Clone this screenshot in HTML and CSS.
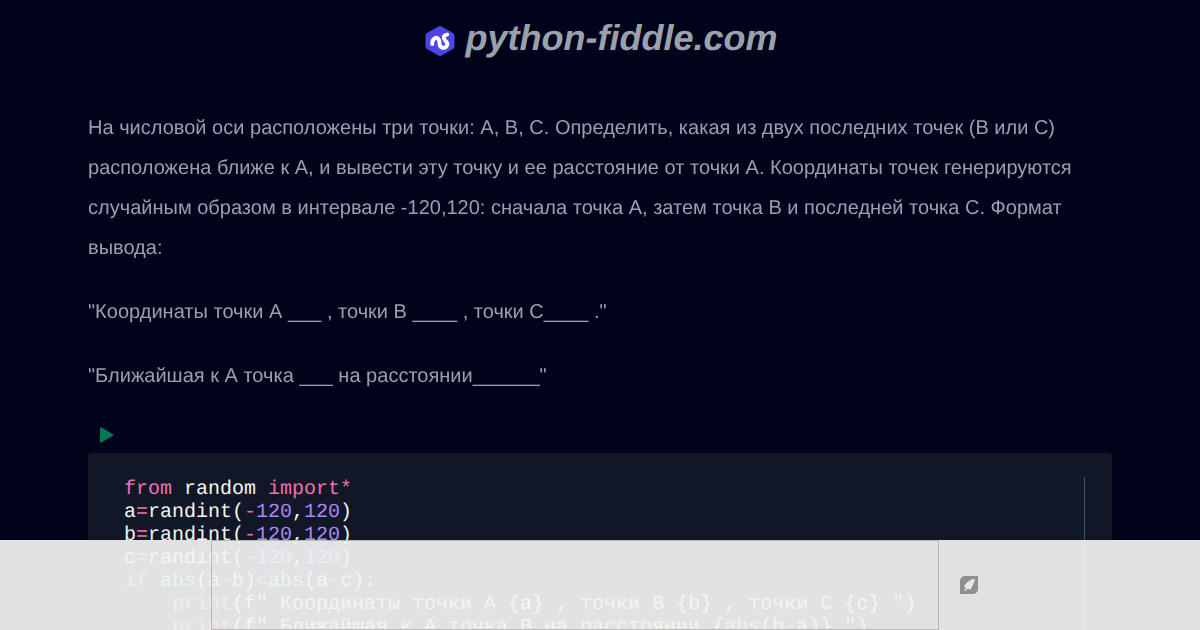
FILE: index.html
```html
<!DOCTYPE html>
<html lang="ru">
<head>
<meta charset="utf-8">
<title>python-fiddle.com</title>
<link rel="stylesheet" href="styles.css">
</head>
<body>
<header class="site-header">
  <svg class="logo" viewBox="0.5 0.5 29 29" width="30" height="30" aria-hidden="true">
    <path class="logo-hex" d="M13.500.9a3 3 0 0 1 3 0l11 6.300a3 3 0 0 1 1.500 2.600v10.400a3 3 0 0 1-1.500 2.600l-11 6.300a3 3 0 0 1-3 0l-11-6.300A3 3 0 0 1 1 20.200V9.800a3 3 0 0 1 1.500-2.600z"/>
    <path class="logo-mark" d="M7.500 18C7 13 11.500 10.500 13.500 13S13 21 17.500 21.500C21.500 21.800 23.500 18 20.800 15.500 18 13 17.500 9.500 22 8.800"/>
  </svg>
  <span class="brand">python-fiddle.com</span>
</header>
<main class="content">
  <p class="lead">На числовой оси расположены три точки: А, В, С. Определить, какая из двух последних точек (В или С) расположена ближе к А, и вывести эту точку и ее расстояние от точки А. Координаты точек генерируются случайным образом в интервале -120,120: сначала точка А, затем точка В и последней точка С. Формат вывода:</p>
  <p class="lead">"Координаты точки А ___ , точки В ____ , точки С____ ."</p>
  <p class="lead">"Ближайшая к А точка ___ на расстоянии______"</p>
  <div class="toolbar">
    <svg class="run" viewBox="0 0 14 16" width="14" height="16" aria-hidden="true"><path d="M0 1.400a1 1 0 0 1 1.500-.8l11.500 6.600a.9.900 0 0 1 0 1.600L1.500 15.400a1 1 0 0 1-1.500-.8z"/></svg>
  </div>
  <div class="editor">
<pre class="code"><span class="k">from</span> random <span class="k">import*</span>
a<span class="k">=</span>randint(<span class="k">-</span><span class="n">120</span>,<span class="n">120</span>)
b<span class="k">=</span>randint(<span class="k">-</span><span class="n">120</span>,<span class="n">120</span>)
c<span class="k">=</span>randint(<span class="k">-</span><span class="n">120</span>,<span class="n">120</span>)
<span class="k">if</span> <span class="b">abs</span>(a<span class="k">-</span>b)<span class="k">&lt;</span><span class="b">abs</span>(a<span class="k">-</span>c):
    <span class="k">print</span>(f<span class="s">" Координаты точки А </span>{a}<span class="s"> , точки В </span>{b}<span class="s"> , точки С </span>{c}<span class="s"> "</span>)
    <span class="k">print</span>(f<span class="s">" Ближайшая к А точка В на расстоянии </span>{<span class="b">abs</span>(b<span class="k">-</span>a)}<span class="s"> "</span>)</pre>
    <div class="ruler"></div>
  </div>
</main>
<aside class="ad-bar">
  <div class="ad-slot"></div>
  <svg class="ad-icon" viewBox="0 0 18 18" width="18" height="18" aria-hidden="true">
    <path class="ad-leaf" d="M5 0h13v13a5 5 0 0 1-5 5H0V5a5 5 0 0 1 5-5z"/>
    <path class="ad-plane" d="M15.500 2.500C10 3.500 5.500 6.500 4 11l2 .8-2.500 3.700 5-2.800 1.700 1c2.300-3 4.300-7 4.800-11.200z"/>
  </svg>
</aside>
</body>
</html>
```
FILE: styles.css
```css
html, body {
  margin: 0;
  height: 630px;
  overflow: hidden;
}
body {
  position: relative;
  background: #01031a;
  font-family: "Liberation Sans", Arial, sans-serif;
  color: #9ca3af;
  text-rendering: geometricPrecision;
}
.site-header {
  display: flex;
  justify-content: center;
  align-items: center;
  gap: 11px;
  height: 76px;
  padding-left: 2px;
  opacity: .99;
}
.logo { display: block; margin-top: 6px; }
.logo-hex { fill: #4f46e5; }
.logo-mark {
  fill: none;
  stroke: #fff;
  stroke-width: 3.800;
  stroke-linecap: round;
  stroke-linejoin: round;
}
.brand {
  font-size: 36px;
  line-height: 40px;
  font-weight: 700;
  font-style: italic;
}
.content {
  padding: 32px 88px 0;
  opacity: .99;
}
.lead {
  margin: 0 0 24px;
  font-size: 20px;
  line-height: 40px;
  letter-spacing: .01px;
}
.toolbar {
  display: flex;
  align-items: center;
  height: 16px;
  padding: 0 0 0 12px;
  margin-top: 31px;
}
.run { display: block; fill: #047857; }
.editor {
  position: relative;
  margin-top: 10px;
  height: 300px;
  background: #111827;
  border-radius: 4px;
  padding: 25px 36px 24px;
  box-sizing: border-box;
}
.code {
  margin: 0;
  font-family: "Liberation Mono", "Courier New", monospace;
  font-size: 20px;
  line-height: 23px;
  color: #f8f8f2;
  white-space: pre;
}
.k { color: #f472b6; }
.n { color: #b388f5; }
.b { color: #8be9fd; }
.s { color: #f1fa8c; }
.ruler {
  position: absolute;
  top: 24px;
  right: 27px;
  bottom: 0;
  width: 1px;
  background: #4b5563;
}
.ad-bar {
  position: absolute;
  left: 0;
  right: 0;
  bottom: 0;
  height: 90px;
  display: flex;
  align-items: center;
  background: rgba(244, 244, 244, 0.92);
}
.ad-slot {
  margin-left: 211px;
  width: 726px;
  height: 88px;
  border: 1px solid #b8b8b8;
}
.ad-icon { display: block; margin-left: 21px; }
.ad-leaf { fill: #8f8f8f; }
.ad-plane { fill: #e6e6e6; }
```
